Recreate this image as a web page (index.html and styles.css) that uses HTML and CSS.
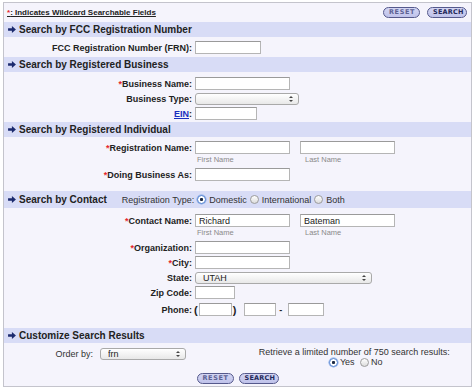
FILE: index.html
```html
<!DOCTYPE html>
<html lang="en">
<head>
    <meta charset="UTF-8">
    <title>License Search</title>
    <link rel="stylesheet" href="styles.css">
</head>
<body>
    <div class="panel">
        <div class="topbar">
            <a class="legend" href="#"><span class="req">*</span>: Indicates Wildcard Searchable Fields</a>
            <div class="btns">
                <button class="pill reset">RESET</button>
                <button class="pill search">SEARCH</button>
            </div>
        </div>

        <div class="band"><svg class="arrow" viewBox="0 0 9 8"><path d="M0 2.6h4.4V0L9 4 4.4 8V5.4H0z"/></svg>Search by FCC Registration Number</div>
        <div class="block frn">
            <div class="row"><span class="lbl">FCC Registration Number (FRN):</span><input class="txt w66"></div>
        </div>

        <div class="band"><svg class="arrow" viewBox="0 0 9 8"><path d="M0 2.6h4.4V0L9 4 4.4 8V5.4H0z"/></svg>Search by Registered Business</div>
        <div class="block biz">
            <div class="row"><span class="lbl"><span class="req">*</span>Business Name:</span><input class="txt w95"></div>
            <div class="row"><span class="lbl">Business Type:</span><span class="sel w104"><select><option></option></select></span></div>
            <div class="row"><span class="lbl"><a href="#">EIN</a>:</span><input class="txt w62"></div>
        </div>

        <div class="band"><svg class="arrow" viewBox="0 0 9 8"><path d="M0 2.6h4.4V0L9 4 4.4 8V5.4H0z"/></svg>Search by Registered Individual</div>
        <div class="block indiv">
            <div class="row"><span class="lbl"><span class="req">*</span>Registration Name:</span><input class="txt w95"><input class="txt w95 second"></div>
            <div class="subs"><span class="first">First Name</span><span>Last Name</span></div>
            <div class="row gap"><span class="lbl"><span class="req">*</span>Doing Business As:</span><input class="txt w95"></div>
        </div>

        <div class="band tall"><svg class="arrow" viewBox="0 0 9 8"><path d="M0 2.6h4.4V0L9 4 4.4 8V5.4H0z"/></svg>Search by Contact
            <span class="regtype">Registration Type:
                <span class="radio on"></span>Domestic
                <span class="radio"></span>International
                <span class="radio"></span>Both
            </span>
        </div>
        <div class="block contact">
            <div class="row"><span class="lbl"><span class="req">*</span>Contact Name:</span><input class="txt w95" value="Richard"><input class="txt w95 second" value="Bateman"></div>
            <div class="subs"><span class="first">First Name</span><span>Last Name</span></div>
            <div class="row gap"><span class="lbl"><span class="req">*</span>Organization:</span><input class="txt w95"></div>
            <div class="row"><span class="lbl"><span class="req">*</span>City:</span><input class="txt w95"></div>
            <div class="row"><span class="lbl">State:</span><span class="sel w177"><select><option>UTAH</option></select></span></div>
            <div class="row"><span class="lbl">Zip Code:</span><input class="txt w40"></div>
            <div class="row phone"><span class="lbl">Phone:</span><span class="paren">(</span><input class="txt w33"><span class="paren close">)</span><input class="txt w32"><span class="dash">-</span><input class="txt w36"></div>
        </div>

        <div class="band"><svg class="arrow" viewBox="0 0 9 8"><path d="M0 2.6h4.4V0L9 4 4.4 8V5.4H0z"/></svg>Customize Search Results</div>
        <div class="block results">
            <div class="cols">
                <div class="half"><span class="plain">Order by:</span><span class="sel w86"><select><option>frn</option></select></span></div>
                <div class="half">
                    <div class="plain">Retrieve a limited number of 750 search results:</div>
                    <div class="plain yn"><span class="radio on"></span>Yes <span class="radio"></span>No</div>
                </div>
            </div>
            <div class="actions">
                <button class="pill reset">RESET</button>
                <button class="pill search">SEARCH</button>
            </div>
        </div>
    </div>
</body>
</html>
```

FILE: styles.css
```css
* {
    box-sizing: border-box;
}

body {
    margin: 0;
    background-color: #ffffff;
    font-family: "Liberation Sans", Arial, sans-serif;
    color: #222222;
}

.panel {
    margin: 2px 0 0 3px;
    width: 469px;
    border: 1px solid #c4c4cc;
    background-color: #f5f4fc;
}

/* top line: legend + buttons */
.topbar {
    height: 19px;
    display: flex;
    align-items: center;
    justify-content: space-between;
    padding: 0 4px 0 3px;
}

.legend {
    font-size: 8px;
    font-weight: bold;
    color: #222222;
    text-decoration: underline;
}

.req {
    color: #e5262b;
    font-weight: bold;
}

.btns {
    display: flex;
    gap: 7px;
}

.pill {
    height: 11px;
    padding: 0 5px;
    border: 1px solid #55598c;
    border-radius: 6px;
    background: linear-gradient(#d3d5f3, #bfc2ea);
    font-family: "DejaVu Sans", sans-serif;
    font-size: 6.5px;
    font-weight: bold;
    letter-spacing: 0.6px;
    line-height: 9px;
    color: #24295a;
    cursor: pointer;
}

.pill.reset {
    width: 37px;
    color: #5d6294;
}

.pill.search {
    width: 40px;
    letter-spacing: 0.2px;
}

/* section headers */
.band {
    height: 15px;
    display: flex;
    align-items: center;
    padding-left: 4px;
    background-color: #d8dcf6;
    font-size: 10px;
    font-weight: bold;
    color: #222222;
    white-space: nowrap;
}

.band.tall {
    height: 17px;
}

.arrow {
    width: 8px;
    height: 7px;
    margin-right: 3px;
    fill: #1b2a6e;
    flex: none;
}

.regtype {
    display: flex;
    align-items: center;
    margin-left: 15px;
    font-size: 9px;
    font-weight: normal;
    color: #333333;
}

/* rows */
.block.frn {
    padding: 4px 0 3px;
}

.block.biz {
    padding: 3px 0 2px;
}

.block.indiv {
    padding: 4px 0 10px;
}

.block.contact {
    padding: 6px 0 12px;
}

.row {
    display: flex;
    align-items: center;
    height: 13px;
    margin-top: 2px;
}

.block.frn .row,
.block.indiv .row:first-child,
.block.contact .row:first-child {
    margin-top: 0;
}

.row.gap {
    margin-top: 4px;
}

.row.phone {
    margin-top: 4px;
}

.lbl {
    flex: none;
    width: 191px;
    padding-right: 3px;
    text-align: right;
    font-size: 9px;
    font-weight: bold;
    color: #222222;
}

.lbl a {
    color: #1a2fbf;
}

.txt {
    height: 13px;
    margin: 0;
    padding: 0 3px;
    border: 1px solid #b5b5b5;
    border-top-color: #9a9a9a;
    background-color: #ffffff;
    font-family: "Liberation Sans", Arial, sans-serif;
    font-size: 9px;
    color: #222222;
}

.txt.second {
    margin-left: 10px;
}

.w32 { width: 32px; }
.w33 { width: 33px; }
.w36 { width: 36px; }
.w40 { width: 40px; }
.w62 { width: 62px; }
.w66 { width: 66px; }
.w86 { width: 86px; }
.w95 { width: 95px; }
.w104 { width: 104px; }
.w177 { width: 177px; }

.subs {
    display: flex;
    height: 10px;
    align-items: center;
    padding-left: 193px;
    font-size: 7.5px;
    color: #8a8a8a;
}

.subs .first {
    width: 108px;
}

.paren {
    font-size: 11px;
    font-weight: bold;
    margin: 0 1px 0 -1px;
}

.paren.close {
    margin: 0 8px 0 1px;
}

.dash {
    font-size: 9px;
    font-weight: bold;
    margin: 0 6px 0 3px;
}

/* select box */
.sel {
    position: relative;
    display: block;
    flex: none;
    height: 12px;
}

.sel select {
    display: block;
    width: 100%;
    height: 12px;
    margin: 0;
    padding: 0 0 0 7px;
    appearance: none;
    -webkit-appearance: none;
    border: 1px solid #a9a9a9;
    border-radius: 3px;
    background: linear-gradient(#ffffff, #e8e8e8);
    font-family: "Liberation Sans", Arial, sans-serif;
    font-size: 9px;
    color: #222222;
    line-height: 10px;
}

.sel::before,
.sel::after {
    content: "";
    position: absolute;
    right: 6px;
    border-left: 2px solid transparent;
    border-right: 2px solid transparent;
}

.sel::before {
    top: 3px;
    border-bottom: 2px solid #444444;
}

.sel::after {
    top: 7px;
    border-top: 2px solid #444444;
}

/* radios */
.radio {
    display: inline-block;
    width: 9px;
    height: 9px;
    margin: 0 3px 0 3px;
    border: 1px solid #9c9c9c;
    border-radius: 50%;
    background: linear-gradient(#ffffff, #dcdcdc);
    vertical-align: middle;
}

.radio.on {
    border-color: #4d7fd0;
    background: radial-gradient(circle, #1d2a44 0 1.3px, #ffffff 1.8px);
    box-shadow: 0 0 0 0.5px #7ea6e6;
}

/* customize results */
.block.results {
    padding: 4px 0 2px;
}

.cols {
    display: flex;
}

.half {
    width: 50%;
    text-align: center;
}

.half:first-child {
    display: flex;
    justify-content: center;
    align-items: center;
    gap: 7px;
    padding-top: 1px;
    height: 12px;
}

.plain {
    font-size: 9px;
    color: #333333;
    line-height: 10px;
}

.yn .radio {
    margin: -1px 2px 0 3px;
}

.actions {
    display: flex;
    justify-content: center;
    gap: 5px;
    margin-top: 6px;
}
```
